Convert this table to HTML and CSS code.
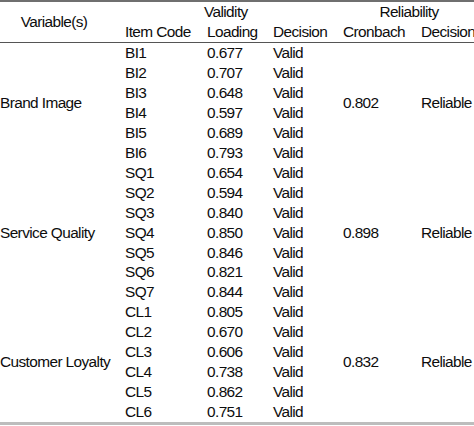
FILE: index.html
```html
<!DOCTYPE html>
<html>
<head>
<meta charset="utf-8">
<link rel="stylesheet" href="styles.css">
</head>
<body>
<table class="tbl">
  <colgroup>
    <col class="c1"><col class="c2"><col class="c3"><col class="c4"><col class="c5"><col class="c6">
  </colgroup>
  <thead>
    <tr class="h1">
      <th rowspan="2" class="var-h">Variable(s)</th>
      <th></th>
      <th class="validity">Validity</th>
      <th></th>
      <th colspan="2" class="rel">Reliability</th>
    </tr>
    <tr class="h2">
      <th>Item Code</th>
      <th>Loading</th>
      <th>Decision</th>
      <th>Cronbach</th>
      <th>Decision</th>
    </tr>
  </thead>
  <tbody>
    <tr><td rowspan="6" class="var">Brand Image</td><td>BI1</td><td>0.677</td><td>Valid</td><td rowspan="6">0.802</td><td rowspan="6">Reliable</td></tr>
    <tr><td>BI2</td><td>0.707</td><td>Valid</td></tr>
    <tr><td>BI3</td><td>0.648</td><td>Valid</td></tr>
    <tr><td>BI4</td><td>0.597</td><td>Valid</td></tr>
    <tr><td>BI5</td><td>0.689</td><td>Valid</td></tr>
    <tr><td>BI6</td><td>0.793</td><td>Valid</td></tr>
    <tr><td rowspan="7" class="var">Service Quality</td><td>SQ1</td><td>0.654</td><td>Valid</td><td rowspan="7">0.898</td><td rowspan="7">Reliable</td></tr>
    <tr><td>SQ2</td><td>0.594</td><td>Valid</td></tr>
    <tr><td>SQ3</td><td>0.840</td><td>Valid</td></tr>
    <tr><td>SQ4</td><td>0.850</td><td>Valid</td></tr>
    <tr><td>SQ5</td><td>0.846</td><td>Valid</td></tr>
    <tr><td>SQ6</td><td>0.821</td><td>Valid</td></tr>
    <tr><td>SQ7</td><td>0.844</td><td>Valid</td></tr>
    <tr><td rowspan="6" class="var">Customer Loyalty</td><td>CL1</td><td>0.805</td><td>Valid</td><td rowspan="6">0.832</td><td rowspan="6">Reliable</td></tr>
    <tr><td>CL2</td><td>0.670</td><td>Valid</td></tr>
    <tr><td>CL3</td><td>0.606</td><td>Valid</td></tr>
    <tr><td>CL4</td><td>0.738</td><td>Valid</td></tr>
    <tr><td>CL5</td><td>0.862</td><td>Valid</td></tr>
    <tr><td>CL6</td><td>0.751</td><td>Valid</td></tr>
  </tbody>
</table>
</body>
</html>
```
FILE: styles.css
```css
html, body {
  margin: 0;
  padding: 0;
  background: #ffffff;
}
.tbl {
  width: 474px;
  border-collapse: collapse;
  table-layout: fixed;
  font-family: "Liberation Sans", Arial, sans-serif;
  font-size: 15.4px;
  letter-spacing: -0.6px;
  color: #0d0d0d;
  border-top: 2px solid #6f6f6f;
  border-bottom: 3px solid #bdbdbd;
}
.c1 { width: 118px; }
.c2 { width: 82px; }
.c3 { width: 66px; }
.c4 { width: 70px; }
.c5 { width: 78px; }
.c6 { width: 60px; }
th, td {
  padding: 0 0 0 7px;
  text-align: left;
  font-weight: normal;
  white-space: nowrap;
  overflow: visible;
  vertical-align: middle;
}
thead tr.h1 th { height: 20px; line-height: 20px; }
thead tr.h2 th { height: 20px; line-height: 20px; }
thead tr.h2 { border-bottom: 1.5px solid #555555; }
th.var-h {
  text-align: center;
  padding: 0 10px 0 0;
}
th.validity { padding-left: 4px; }
th.rel {
  text-align: center;
  padding-left: 8px;
}
tbody td {
  height: 19.95px;
  line-height: 19.95px;
}
td.var { padding-left: 0; }
```
